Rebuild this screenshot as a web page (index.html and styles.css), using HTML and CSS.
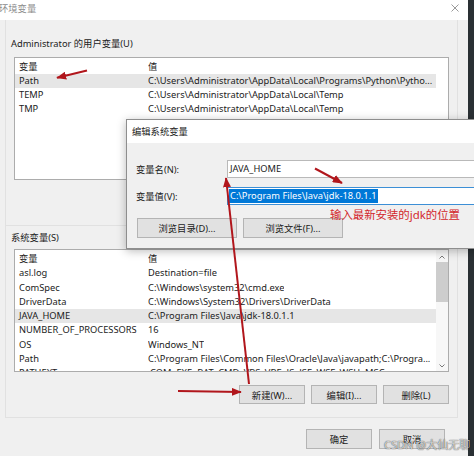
FILE: index.html
```html
<!DOCTYPE html>
<html lang="zh-CN">
<head>
<meta charset="utf-8">
<title>环境变量</title>
<link rel="stylesheet" href="styles.css">
</head>
<body>
<div class="screen">
  <div class="window">
    <div class="titlebar">
      <span class="title">环境变量</span>
      <svg class="close" width="8" height="8" viewBox="0 0 8 8"><path d="M0.5 0.5 L7.5 7.5 M7.5 0.5 L0.5 7.5" stroke="#9a9a9a" stroke-width="1" fill="none"/></svg>
    </div>

    <section class="group group-user">
      <div class="group-label">Administrator 的用户变量(U)</div>
      <div class="list list-user">
        <div class="rows">
          <div class="row"><span class="c1">变量</span><span class="c2">值</span></div>
          <div class="row sel"><span class="c1">Path</span><span class="c2">C:\Users\Administrator\AppData\Local\Programs\Python\Pytho...</span></div>
          <div class="row"><span class="c1">TEMP</span><span class="c2">C:\Users\Administrator\AppData\Local\Temp</span></div>
          <div class="row"><span class="c1">TMP</span><span class="c2">C:\Users\Administrator\AppData\Local\Temp</span></div>
        </div>
      </div>
    </section>

    <section class="group group-sys">
      <div class="group-label">系统变量(S)</div>
      <div class="list list-sys">
        <div class="rows">
          <div class="row"><span class="c1">变量</span><span class="c2">值</span></div>
          <div class="row"><span class="c1">asl.log</span><span class="c2">Destination=file</span></div>
          <div class="row"><span class="c1">ComSpec</span><span class="c2">C:\Windows\system32\cmd.exe</span></div>
          <div class="row"><span class="c1">DriverData</span><span class="c2">C:\Windows\System32\Drivers\DriverData</span></div>
          <div class="row sel"><span class="c1">JAVA_HOME</span><span class="c2">C:\Program Files\Java\jdk-18.0.1.1</span></div>
          <div class="row"><span class="c1">NUMBER_OF_PROCESSORS</span><span class="c2">16</span></div>
          <div class="row"><span class="c1">OS</span><span class="c2">Windows_NT</span></div>
          <div class="row"><span class="c1">Path</span><span class="c2">C:\Program Files\Common Files\Oracle\Java\javapath;C:\Progra...</span></div>
          <div class="row"><span class="c1">PATHEXT</span><span class="c2">.COM;.EXE;.BAT;.CMD;.VBS;.VBE;.JS;.JSE;.WSF;.WSH;.MSC</span></div>
        </div>
        <div class="scrollbar">
          <svg class="sb-arrow" width="12" height="10" viewBox="0 0 12 10"><path d="M3.5 6.5 L6 4 L8.5 6.5" stroke="#7a7a7a" stroke-width="1" fill="none"/></svg>
          <div class="sb-thumb"></div>
          <div class="sb-track"></div>
          <svg class="sb-arrow" width="12" height="10" viewBox="0 0 12 10"><path d="M3.5 3.5 L6 6 L8.5 3.5" stroke="#7a7a7a" stroke-width="1" fill="none"/></svg>
        </div>
      </div>
      <div class="btn-row">
        <button class="btn btn-sm">新建(W)...</button>
        <button class="btn btn-sm">编辑(I)...</button>
        <button class="btn btn-sm">删除(L)</button>
      </div>
    </section>

    <div class="footer">
      <button class="btn btn-ok">确定</button>
      <button class="btn btn-ok">取消</button>
    </div>
  </div>

  <div class="dialog">
    <div class="dlg-title">编辑系统变量</div>
    <div class="dlg-body">
      <div class="field">
        <span class="field-label">变量名(N):</span>
        <div class="input">JAVA_HOME</div>
      </div>
      <div class="field field-value">
        <span class="field-label">变量值(V):</span>
        <div class="input input-focus"><span class="selected">C:\Program Files\Java\jdk-18.0.1.1</span></div>
      </div>
      <div class="dlg-buttons">
        <button class="btn btn-dlg">浏览目录(D)...</button>
        <button class="btn btn-dlg">浏览文件(F)...</button>
      </div>
    </div>
  </div>

  <svg class="arrows" width="474" height="456" viewBox="0 0 474 456">
    <defs>
      <marker id="ah" markerWidth="5" markerHeight="4" refX="4.6" refY="2" orient="auto" markerUnits="strokeWidth">
        <path d="M0,0 L5,2 L0,4 Z" fill="#b1161c"/>
      </marker>
    </defs>
    <g stroke="#b1161c" stroke-width="2" fill="none" marker-end="url(#ah)">
      <line x1="87" y1="70.5" x2="57" y2="77.7"/>
      <line x1="315" y1="168.5" x2="342" y2="183"/>
      <line x1="249" y1="384" x2="226" y2="178"/>
      <line x1="178" y1="391" x2="241" y2="392"/>
    </g>
  </svg>

  <div class="note">输入最新安装的jdk的位置</div>
  <div class="watermark">CSDN @大仙无聊</div>
</div>
</body>
</html>
```

FILE: styles.css
```css
html, body {
  margin: 0;
  padding: 0;
  width: 474px;
  height: 456px;
  overflow: hidden;
  background: #2a3034;
}

.screen {
  position: relative;
  width: 474px;
  height: 456px;
  overflow: hidden;
  font-family: "Segoe UI", "Noto Sans", "Noto Sans CJK SC", sans-serif;
  font-size: 9.3px;
  color: #1b1b1b;
}

.window {
  width: 468px;
  height: 456px;
  background: #f0f0f0;
  overflow: hidden;
}

.titlebar {
  height: 20px;
  background: #ffffff;
  display: flex;
  justify-content: space-between;
  align-items: flex-start;
  padding: 2px 9px 0 0;
  box-sizing: border-box;
}

.title {
  margin-left: -1px;
  line-height: 13px;
  color: #8c8c8c;
  font-size: 9.3px;
}

.close {
  margin-top: 2px;
}

.group {
  margin-left: 5px;
  width: 453px;
  box-sizing: border-box;
  border: 1px solid #e1e1e1;
  border-top: none;
  padding: 0 8px;
}

.group-user {
  height: 206px;
  padding-top: 18px;
}

.group-sys {
  height: 192px;
  padding-top: 6px;
}

.group-label {
  line-height: 12px;
  margin-left: -3px;
  white-space: nowrap;
}

.list {
  background: #ffffff;
  border: 1px solid #acacac;
  box-sizing: border-box;
  width: 435px;
  height: 124px;
  padding-top: 2px;
  display: flex;
  overflow: hidden;
}

.list-user {
  margin-top: 7px;
  height: 123px;
}

.list-sys {
  margin-top: 5px;
  height: 123px;
}

.rows {
  width: 421px;
  flex: none;
}

.row {
  display: flex;
  height: 14px;
  line-height: 14px;
  white-space: nowrap;
  overflow: hidden;
}

.list-sys .row {
  height: 14.3px;
  line-height: 14.3px;
}

.row.sel {
  background: #e6e6e6;
}

.c1 {
  width: 129px;
  flex: none;
  padding-left: 4px;
}

.c2 {
  overflow: hidden;
}

.scrollbar {
  width: 12px;
  flex: none;
  margin-top: -2px;
  display: flex;
  flex-direction: column;
  background: #f7f7f7;
}

.sb-arrow {
  display: block;
  flex: none;
  margin-top: 2px;
}

.sb-thumb {
  height: 40px;
  background: #cdcdcd;
  flex: none;
}

.sb-track {
  flex: 1;
}

.btn-row {
  display: flex;
  justify-content: flex-end;
  gap: 6px;
  margin-top: 13px;
}

.btn {
  font-family: inherit;
  font-size: 9.3px;
  color: #1b1b1b;
  background: #e1e1e1;
  border: 1px solid #b4b4b4;
  padding: 0;
  margin: 0;
  box-sizing: border-box;
}

.btn-sm {
  width: 66px;
  height: 19px;
}

.footer {
  display: flex;
  justify-content: flex-end;
  gap: 7px;
  padding-right: 23px;
  margin-top: 11px;
}

.btn-ok {
  width: 66px;
  height: 20px;
}

/* floating edit dialog */
.dialog {
  position: absolute;
  left: 126px;
  top: 119px;
  width: 362px;
  height: 130px;
  box-sizing: border-box;
  background: #f0f0f0;
  border: 1px solid #8e8e8e;
  box-shadow: 0 2px 9px rgba(0, 0, 0, 0.28);
}

.dlg-title {
  height: 23px;
  background: #ffffff;
  padding-left: 5px;
  line-height: 23px;
  color: #222;
}

.dlg-body {
  padding: 17px 0 0 9px;
}

.field {
  display: flex;
  align-items: center;
  height: 18px;
}

.field-value {
  margin-top: 9px;
}

.field-label {
  width: 91px;
  flex: none;
}

.input {
  flex: 1;
  height: 18px;
  box-sizing: border-box;
  background: #ffffff;
  border: 1px solid #b9b9b9;
  line-height: 16px;
  padding-left: 2px;
  white-space: nowrap;
}

.input-focus {
  border-color: #3c8fd6;
  padding-left: 1px;
}

.selected {
  background: #0078d7;
  color: #ffffff;
  display: inline-block;
  line-height: 14px;
  padding: 0 1px;
}

.dlg-buttons {
  display: flex;
  gap: 6px;
  margin-top: 13px;
  padding-left: 1px;
}

.btn-dlg {
  width: 100px;
  height: 20px;
}

/* annotation layer */
.arrows {
  position: absolute;
  left: 0;
  top: 0;
}

.note {
  position: absolute;
  left: 330px;
  top: 207px;
  font-size: 11.4px;
  line-height: 15px;
  color: #d3262b;
  white-space: nowrap;
}

.watermark {
  position: absolute;
  left: 384px;
  top: 437px;
  font-size: 11px;
  line-height: 15px;
  color: rgba(255, 255, 255, 0.75);
  text-shadow: 0 0 1px rgba(0, 0, 0, 0.55), 0 0 1px rgba(0, 0, 0, 0.55);
  white-space: nowrap;
}
```
